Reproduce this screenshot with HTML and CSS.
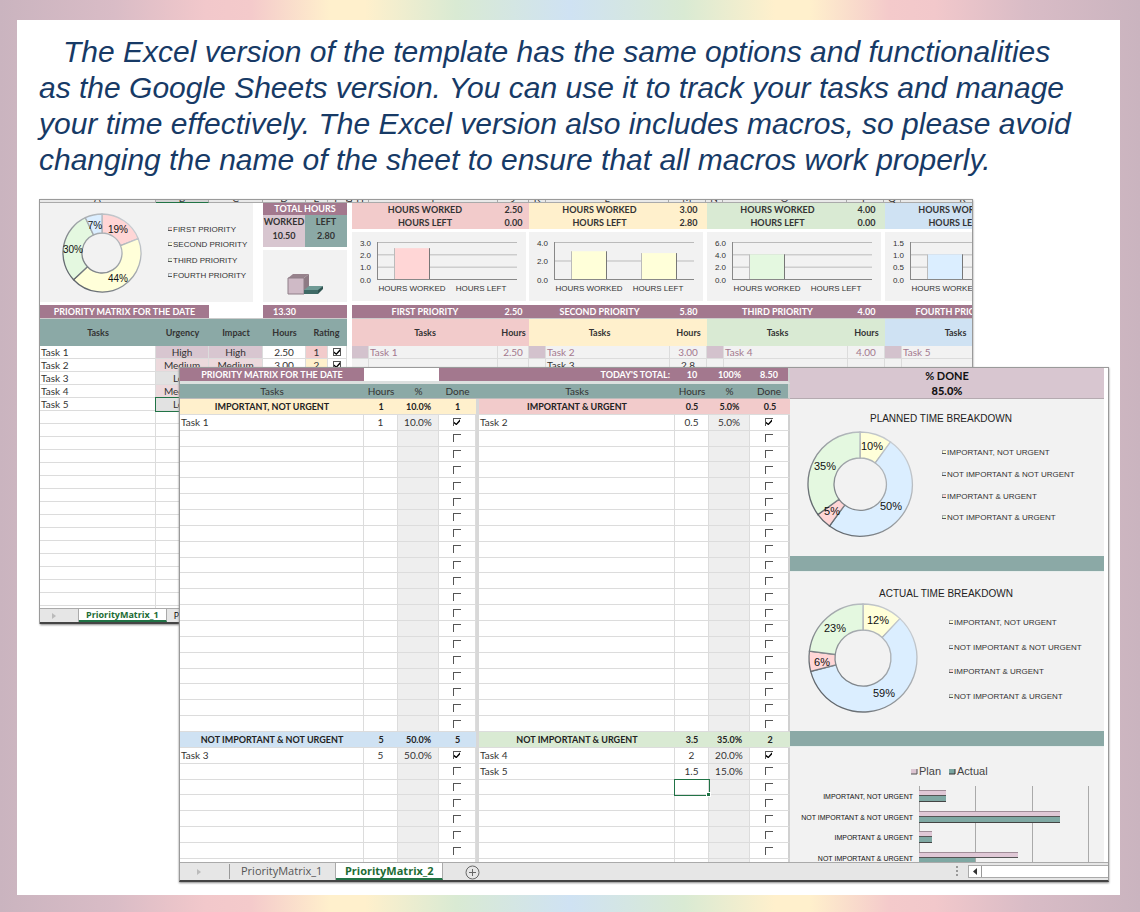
FILE: index.html
```html
<!DOCTYPE html>
<html lang="en">
<head>
  <meta charset="UTF-8">
  <title>Priority Matrix - Excel version</title>
  <link rel="stylesheet" href="styles.css">
</head>
<body>
  <main class="page">
    <p class="intro">The Excel version of the template has the same options and functionalities<br>
      as the Google Sheets version. You can use it to track your tasks and manage<br>
      your time effectively. The Excel version also includes macros, so please avoid<br>
      changing the name of the sheet to ensure that all macros work properly.</p>

    <div class="stage">
      <!-- PriorityMatrix_1 -->
      <section class="window win-back">
        <div class="columns">
          <span class="w116">A</span><span class="w53 selected">B</span><span class="w54">C</span><span class="w43">D</span><span class="w22">E</span><span class="w19">F</span><span class="w5">G</span>
          <span class="w17">H</span><span class="w129">I</span><span class="w31">J</span><span class="w17">K</span><span class="w123">L</span><span class="w37">M</span><span class="w17">N</span><span class="w124">O</span><span class="w37">P</span><span class="w17">Q</span><span class="w124">R</span>
        </div>
        <div class="sheet">
          <div class="matrix">
            <div class="summary">
              <svg class="share-chart" width="213" height="99">
                <g class="donut" data-cx="62" data-cy="50" data-outer="39" data-inner="20" data-slices="19:pink,44:yellow,30:green,7:blue"></g>
                <g class="percent small">
                  <text x="78" y="30">19%</text>
                  <text x="78" y="79">44%</text>
                  <text x="33" y="50">30%</text>
                  <text x="55" y="26">7%</text>
                </g>
                <g class="legend" data-x="128" data-ys="26,41,57,72" data-labels="FIRST PRIORITY|SECOND PRIORITY|THIRD PRIORITY|FOURTH PRIORITY" data-colors="pink,yellow,green,blue"></g>
              </svg>
              <div class="totals">
                <h2>TOTAL HOURS</h2>
                <dl>
                  <div class="worked"><dt>WORKED</dt><dd>10.50</dd></div>
                  <div class="left"><dt>LEFT</dt><dd>2.80</dd></div>
                </dl>
                <svg class="cube" width="84" height="52">
                  <path d="M25 28l5-4h16l-5 4z" fill="#97828c"/>
                  <path d="M41 28l5-4v16l-5 4z" fill="#8e7a84"/>
                  <path d="M25 28h16v16H25z" fill="#cfbac6" stroke="#8f7f88"/>
                  <path d="M41 40l5-4h14l-5 5z" fill="#6f9a95"/>
                  <path d="M41 40h14v4H41z" fill="#3f6a66"/>
                  <path d="M55 40l5-4v3l-5 5z" fill="#2f5451"/>
                </svg>
              </div>
            </div>
            <table class="tasks-table">
              <colgroup><col class="w116"><col class="w53"><col class="w54"><col class="w43"><col class="w22"><col class="w19"></colgroup>
              <thead>
                <tr class="title"><th colspan="2">PRIORITY MATRIX FOR THE DATE</th><td class="blank"></td><th>13.30</th><th colspan="2"></th></tr>
                <tr class="heads"><th>Tasks</th><th>Urgency</th><th>Impact</th><th>Hours</th><th colspan="2">Rating</th></tr>
              </thead>
              <tbody id="matrixRows"></tbody>
            </table>
          </div>
          <div class="priorities" id="priorities"></div>
        </div>
        <nav class="tabs">
          <span class="arrow"></span>
          <button class="active">PriorityMatrix_1</button>
          <button class="next">PriorityMatrix_2</button>
        </nav>
      </section>

      <!-- PriorityMatrix_2 -->
      <section class="window win-front">
        <div class="sheet">
          <table class="day-table">
            <colgroup>
              <col class="w184"><col class="w34"><col class="w41"><col class="w37"><col class="w3">
              <col class="w196"><col class="w34"><col class="w41"><col class="w40">
            </colgroup>
            <thead>
              <tr class="title">
                <th>PRIORITY MATRIX FOR THE DATE</th><td colspan="2" class="blank"></td><th colspan="2"></th>
                <th class="total">TODAY'S TOTAL:</th><th>10</th><th>100%</th><th>8.50</th>
              </tr>
              <tr class="heads">
                <th>Tasks</th><th>Hours</th><th>%</th><th>Done</th><th></th>
                <th>Tasks</th><th>Hours</th><th>%</th><th>Done</th>
              </tr>
            </thead>
            <tbody id="dayRows"></tbody>
          </table>
          <aside class="charts">
            <div class="done-rate"><span>% DONE</span><strong>85.0%</strong></div>
            <svg class="chart" width="314" height="157">
              <text class="chart-title" x="151" y="23">PLANNED TIME BREAKDOWN</text>
              <g class="donut" data-cx="70" data-cy="85" data-outer="52" data-inner="26" data-slices="10:yellow,50:blue,5:pink,35:green"></g>
              <g class="percent">
                <text x="82" y="51">10%</text>
                <text x="101" y="111">50%</text>
                <text x="42" y="116">5%</text>
                <text x="35" y="71">35%</text>
              </g>
              <g class="legend" data-x="152" data-ys="53,75,97,118" data-labels="IMPORTANT, NOT URGENT|NOT IMPORTANT &amp; NOT URGENT|IMPORTANT &amp; URGENT|NOT IMPORTANT &amp; URGENT" data-colors="yellow,blue,pink,green"></g>
            </svg>
            <div class="divider"></div>
            <svg class="chart" width="314" height="159">
              <text class="chart-title" x="156" y="25">ACTUAL TIME BREAKDOWN</text>
              <g class="donut" data-cx="73" data-cy="86" data-outer="54" data-inner="28" data-slices="12:yellow,59:blue,6:pink,23:green"></g>
              <g class="percent">
                <text x="88" y="52">12%</text>
                <text x="94" y="125">59%</text>
                <text x="32" y="94">6%</text>
                <text x="45" y="60">23%</text>
              </g>
              <g class="legend" data-x="159" data-ys="50,75,99,124" data-labels="IMPORTANT, NOT URGENT|NOT IMPORTANT &amp; NOT URGENT|IMPORTANT &amp; URGENT|NOT IMPORTANT &amp; URGENT" data-colors="yellow,blue,pink,green"></g>
            </svg>
            <div class="divider"></div>
            <svg class="chart" width="314" height="115">
              <g class="series">
                <rect x="121" y="22" width="6" height="5" fill="#dcc5d2"/><path d="M121 27h6v-5" fill="none" stroke="#555"/>
                <text x="129" y="28">Plan</text>
                <rect x="159" y="22" width="6" height="5" fill="#7ba6a1"/><path d="M159 27h6v-5" fill="none" stroke="#333"/>
                <text x="167" y="28">Actual</text>
              </g>
              <path class="axis" d="M129.500 39v76M185.500 39v76M242.500 39v76M298.500 39v76"/>
              <g id="planBars"></g>
            </svg>
          </aside>
        </div>
        <nav class="tabs">
          <span class="arrow"></span>
          <button class="first">PriorityMatrix_1</button>
          <button class="active">PriorityMatrix_2</button>
          <button class="add" aria-label="New sheet">
            <svg width="15" height="15"><circle cx="7.500" cy="7.500" r="6.500"/><path d="M4 7.500h7M7.500 4v7"/></svg>
          </button>
          <span class="grip"></span>
          <div class="scroll">
            <button aria-label="Scroll left"><svg width="12" height="11"><path d="M8 2v7L4 5.500z"/></svg></button>
          </div>
        </nav>
      </section>
    </div>
  </main>
  <script src="script.js"></script>
</body>
</html>
```
FILE: styles.css
```css
* {
  box-sizing: border-box;
}

body {
  margin: 0;
  min-height: 100vh;
  padding: 20px 20px 17px 17px;
  display: flex;
  background: linear-gradient(90deg, #cab4bf 0%, #d9bcc6 10%, #f2c8cb 18%, #f4cacb 22%, #fff0cc 29%, #fff0cc 32%, #d9ead3 40%, #cfe2f3 50%, #d9ead3 60%, #fff0cc 68%, #fff0cc 71%, #f4cacb 78%, #f2c8cb 82%, #d9bcc6 90%, #cab4bf 100%);
  font-family: Lato, sans-serif;
  font-size: 10px;
  color: #333;
}

.page {
  flex: 1;
  min-width: 0;
  padding: 14px 11px 11px 22px;
  background: #fff;
}

.intro {
  margin: 0;
  font: italic 30px/36px "Liberation Sans", Arial, sans-serif;
  color: #173a66;
  text-indent: 24px;
  white-space: nowrap;
}

.stage {
  display: grid;
  margin: 21px 0 0 1px;
}

.window {
  grid-area: 1 / 1;
  min-width: 0;
  align-self: start;
  isolation: isolate;
  overflow: hidden;
  background: #fff;
  border: 1px solid #9a9a9a;
  border-bottom: 2px solid #444;
  box-shadow: 0 1px 2px #888;
}

.win-back {
  margin-right: 136px;
  border-left: none;
  box-shadow: -1px 0 #9a9a9a, 0 1px 2px #888;
}

.win-front {
  margin: 168px 0 0 139px;
  z-index: 1;
}

.sheet {
  display: flex;
}

button {
  border: none;
  padding: 0;
  background: none;
  font-family: inherit;
  cursor: pointer;
}

table {
  border-collapse: separate;
  border-spacing: 0;
  table-layout: fixed;
}

th, td {
  padding: 0;
  text-align: center;
  white-space: nowrap;
  overflow: hidden;
}

/* column widths */
.w3 { width: 3px; }
.w5 { width: 5px; }
.w17 { width: 17px; }
.w19 { width: 19px; }
.w22 { width: 22px; }
.w31 { width: 31px; }
.w34 { width: 34px; }
.w37 { width: 37px; }
.w40 { width: 40px; }
.w41 { width: 41px; }
.w43 { width: 43px; }
.w53 { width: 53px; }
.w54 { width: 54px; }
.w116 { width: 116px; }
.w123 { width: 123px; }
.w124 { width: 124px; }
.w129 { width: 129px; }
.w177 { width: 177px; }
.w178 { width: 178px; }
.w184 { width: 184px; }
.w196 { width: 196px; }

input[type="checkbox"] {
  appearance: none;
  display: block;
  width: 8px;
  height: 8px;
  margin: 0 auto;
  border: 1px solid #555;
  background: #fff;
}

input[type="checkbox"]:checked::before {
  content: "";
  display: block;
  width: 6px;
  height: 6px;
  background: #000;
  clip-path: polygon(0 40%, 38% 70%, 100% 0, 100% 36%, 40% 100%, 0 72%);
}

/* back window */
.columns {
  display: flex;
  height: 3px;
  overflow: hidden;
  background: #e9e9e9;
}

.columns span {
  flex: none;
  height: 3px;
  border-right: 1px solid #aaa;
  border-bottom: 1px solid #aaa;
  display: flex;
  align-items: flex-end;
  justify-content: center;
  line-height: 8px;
}

.columns .selected {
  background: #d3d3d3;
  border-bottom-color: #217346;
}

.matrix {
  flex: none;
  width: 307px;
  margin-right: 5px;
}

.summary {
  display: flex;
  justify-content: space-between;
  margin-bottom: 3px;
}

.share-chart {
  background: #f2f2f2;
}

.totals {
  width: 84px;
}

.totals h2 {
  margin: 0;
  font-size: 9px;
  line-height: 12px;
  text-align: center;
  background: #a3788e;
  color: #fff;
}

.totals dl {
  display: flex;
  margin: 0 0 3px;
  height: 32px;
  font-size: 9px;
  font-weight: bold;
  line-height: 14px;
  text-align: center;
}

.totals dd {
  margin: 0;
}

.worked, .left {
  flex: 1;
  min-width: 0;
}

.worked {
  background: #d8c6d0;
}

.left {
  background: #8ba9a6;
}

.cube {
  display: block;
  background: #f2f2f2;
}

.title th {
  height: 13px;
  background: #a3788e;
  color: #fff;
  font-size: 9px;
  line-height: 12px;
}

.tasks-table {
  width: 307px;
}

.tasks-table .heads th {
  height: 28px;
  padding-bottom: 1px;
  background: #8ba9a6;
  border-top: 1px solid #ccc;
  font-size: 9px;
}

.tasks-table td {
  height: 13px;
  line-height: 12px;
  border-right: 1px solid #dcdcdc;
  border-bottom: 1px solid #dcdcdc;
}

.tasks-table .blank, .day-table .blank {
  border: none;
}

.tasks-table td:first-child, .day-table .name {
  padding-left: 1px;
  text-align: left;
}

.tasks-table .high { background: #d8c6d0; }
.tasks-table .medium { background: #ecd9dc; }
.tasks-table .low { background: #e2e2e2; }
.tasks-table .rate1 { background: #f2cbcb; }
.tasks-table .rate2 { background: #fff0cc; }

td.current {
  position: relative;
  overflow: visible;
  box-shadow: 0 0 0 1px #217346;
}

/* fill handle of the selected cell */
td.current::after {
  content: "";
  position: absolute;
  right: -2px;
  bottom: -2px;
  width: 3px;
  height: 3px;
  background: #217346;
  outline: 1px solid #fff;
}

.tasks-table .tail td {
  height: 2px;
  line-height: 0;
  border-bottom: none;
}

.priorities {
  display: flex;
  flex: 1;
  min-width: 0;
  overflow: hidden;
}

.priority {
  flex: none;
}

.worked-left {
  display: flex;
  margin-bottom: 3px;
  font-size: 9px;
  font-weight: bold;
  line-height: 13px;
  text-align: center;
}

.worked-left div {
  flex: 1;
}

.priority > svg {
  display: block;
  margin-bottom: 4px;
}

.priority table {
  width: 100%;
}

.priority .heads th {
  height: 28px;
  padding-bottom: 1px;
  border-top: 1px solid #ccc;
  font-size: 9px;
}

.priority td {
  height: 13px;
  line-height: 12px;
  background: #f2f2f2;
  border-right: 1px solid #dcdcdc;
  border-bottom: 1px solid #dcdcdc;
}

.priority .ticked td {
  color: #a3788e;
}

.priority .ticked td:first-child {
  background: #d3c2cd;
}

.priority td:nth-child(2) {
  padding-left: 1px;
  text-align: left;
}

.tone-pink { background: #f2cbcb; }
.tone-yellow { background: #fff0cc; }
.tone-green { background: #d9ead3; }
.tone-blue { background: #cfe2f3; }

/* front window */
.day-table {
  flex: 1;
  height: 494px;
}

.day-table .title th, .day-table .title td {
  height: 16px;
  border-bottom: 3px solid #dce0df;
}

.day-table .title .total {
  padding-right: 5px;
  text-align: right;
}

.day-table .heads th {
  height: 15px;
  background: #8ba9a6;
  border-bottom: 1px solid #bbb;
  font-size: 10px;
  font-weight: normal;
  line-height: 13px;
}

.day-table td {
  line-height: 13px;
  border-right: 1px solid #dcdcdc;
  border-bottom: 1px solid #dcdcdc;
}

.day-table td:nth-child(3), .day-table td:nth-child(8) {
  background: #eee;
}

.day-table td:nth-child(5) {
  background: #d8d8d8;
  border: none;
}

.day-table .title td {
  background: #fff;
}

.day-table td:last-child, .day-table .title th:last-child, .day-table .heads th:last-child {
  border-right: 2px solid #d0d0d0;
}

.day-table .category td {
  color: #222;
  font-size: 9px;
  font-weight: bold;
  border-right: none;
}

.day-table .category .tone-pink { background: #f2cbcb; }
.day-table .category .tone-yellow { background: #fff0cc; }
.day-table .category .tone-green { background: #d9ead3; }
.day-table .category .tone-blue { background: #cfe2f3; }

.day-table input[type="checkbox"] {
  border-width: 1px 0 0 1px;
}

.day-table .tail td {
  height: 3px;
  line-height: 0;
  border-bottom: none;
}

.charts {
  flex: none;
  width: 318px;
  height: 494px;
  padding-right: 4px;
  overflow: hidden;
}

.done-rate {
  display: flex;
  flex-direction: column;
  align-items: center;
  height: 31px;
  background: #d8c6d0;
  border-bottom: 1px solid #b5aab0;
  color: #111;
  font-size: 11px;
  font-weight: bold;
  line-height: 15px;
}

.chart {
  display: block;
  background: #f2f2f2;
}

.divider {
  height: 16px;
  background: #8ba9a6;
  border-bottom: 1px solid #e8eeed;
}

svg text {
  font-family: "Liberation Sans", Arial, sans-serif;
}

.chart-title {
  font-size: 10px;
  text-anchor: middle;
  fill: #222;
}

.percent text {
  font-size: 11px;
  text-anchor: middle;
  fill: #111;
}

.percent.small text {
  font-size: 10px;
}

.legend text {
  font-size: 8px;
  fill: #333;
}

.series text {
  font-size: 11px;
  fill: #444;
}

.axis {
  stroke: #aaa;
  fill: none;
}

.bar-label {
  font-size: 7px;
  text-anchor: end;
  fill: #111;
}

.scale {
  font-size: 8px;
  text-anchor: end;
  fill: #333;
}

.bar-name {
  font-size: 8px;
  text-anchor: middle;
  fill: #333;
}

/* sheet tabs */
.tabs {
  display: flex;
  height: 18px;
  background: #e6e6e6;
  border-top: 1px solid #aaa;
  font-family: "Open Sans", sans-serif;
}

.tabs .active {
  background: #fff;
  border-right: 1px solid #aaa;
  border-bottom: 2px solid #217346;
  color: #1c6b34;
  font-weight: bold;
}

.arrow {
  display: flex;
  align-items: center;
  justify-content: center;
}

.arrow::before {
  content: "";
  border: 3px solid transparent;
  border-left: 4px solid #bbb;
  border-right: none;
}

.win-back .tabs {
  height: 14px;
}

.win-back .arrow {
  width: 39px;
  padding-right: 10px;
  border-right: 1px solid #aaa;
}

.win-back .tabs button {
  padding: 0 7px;
  font-size: 9px;
  line-height: 10px;
}

.win-front .arrow {
  width: 50px;
  padding-right: 12px;
  border-right: 1px solid #999;
  margin: 1px 0;
}

.win-front .first {
  padding: 0 13px 3px 11px;
  border-right: 1px solid #aaa;
  color: #555;
  font-size: 11px;
  line-height: 13px;
}

.win-front .active {
  width: 107px;
  font-size: 11px;
  line-height: 13px;
}

.add {
  margin-left: 22px;
  padding-top: 1px;
}

.add svg {
  display: block;
  fill: none;
  stroke: #666;
}

.grip {
  margin: 3px 10px 0 auto;
  width: 2px;
  height: 11px;
  background: repeating-linear-gradient(#999 0 2px, transparent 2px 4px);
}

.scroll {
  width: 140px;
  height: 13px;
  margin-top: 2px;
  background: #fff;
  border: 1px solid #aaa;
  border-right: none;
}

.scroll button {
  display: block;
  width: 13px;
  height: 11px;
  border-right: 1px solid #999;
}

.scroll svg {
  display: block;
  fill: #333;
}
```
FILE: script.js
```javascript
const colors = { pink: '#ffd6d6', yellow: '#ffffd9', green: '#e4f8e0', blue: '#dbeeff' };

// PriorityMatrix_1: task list
const tasks = [
  ['Task 1', 'High', 'High', '2.50', 1],
  ['Task 2', 'Medium', 'Medium', '3.00', 2],
  ['Task 3', 'Low', 'High', '2.80', 2],
  ['Task 4', 'Medium', 'Low', '4.00', 3],
  ['Task 5', 'Low', 'Low', '1.00', 4]
];
const box = (checked, label) => `<input type="checkbox" aria-label="${label}"${checked ? ' checked' : ''}>`;

let html = '';
for (let i = 0; i < 20; i++) {
  const t = tasks[i];
  if (t) {
    html += `<tr><td>${t[0]}</td><td class="${t[1].toLowerCase()}${i === 4 ? ' current' : ''}">${t[1]}</td>
      <td class="${t[2].toLowerCase()}">${t[2]}</td><td>${t[3]}</td><td class="rate${t[4]}">${t[4]}</td><td>${box(true, t[0])}</td></tr>`;
  } else {
    html += '<tr>' + '<td></td>'.repeat(6) + '</tr>';
  }
}
html += '<tr class="tail">' + '<td></td>'.repeat(6) + '</tr>';
document.getElementById('matrixRows').innerHTML = html;

// PriorityMatrix_1: four priority blocks
const blocks = [
  { name: 'FIRST', tone: 'pink', worked: 2.5, left: 0, total: '2.50', max: 3, steps: 3, width: 177, cols: [17, 129, 31], rows: [['Task 1', '2.50', true], ['', '']] },
  { name: 'SECOND', tone: 'yellow', worked: 3, left: 2.8, total: '5.80', max: 4, steps: 2, width: 178, cols: [17, 124, 37], rows: [['Task 2', '3.00', true], ['Task 3', '2.8']] },
  { name: 'THIRD', tone: 'green', worked: 4, left: 0, total: '4.00', max: 6, steps: 3, width: 178, cols: [17, 124, 37], rows: [['Task 4', '4.00', true], ['', '']] },
  { name: 'FOURTH', tone: 'blue', worked: 1, left: 0, total: '1.00', max: 1.5, steps: 3, width: 178, cols: [17, 124, 37], rows: [['Task 5', '1.00', true], ['', '']] }
];

function barChart(b) {
  let s = '<rect width="174" height="69" fill="#f2f2f2"/>';
  for (let i = 0; i <= b.steps; i++) {
    const y = 47.5 - 37 * i / b.steps;
    s += `<path d="M25 ${y}h140" stroke="${i ? '#bbb' : '#888'}"/><text class="scale" x="19" y="${y + 3}">${(b.max * i / b.steps).toFixed(1)}</text>`;
  }
  s += '<path d="M25.5 10v37" stroke="#888"/>';
  [[b.worked, 42], [b.left, 112]].forEach(([v, x]) => {
    const h = 37 * v / b.max;
    if (h) {
      s += `<rect x="${x}" y="${47 - h}" width="35" height="${h}" fill="${colors[b.tone]}"/>
        <path d="M${x + 35.5} ${47 - h}v${h}" stroke="#777"/><path d="M${x + .5} ${47 - h}v${h}" stroke="#bbb"/>`;
    }
  });
  return `<svg width="177" height="69">${s}<text class="bar-name" x="60" y="59">HOURS WORKED</text><text class="bar-name" x="129" y="59">HOURS LEFT</text></svg>`;
}

document.getElementById('priorities').innerHTML = blocks.map(b => `
  <div class="priority w${b.width}">
    <div class="worked-left tone-${b.tone}">
      <div>HOURS WORKED<br>HOURS LEFT</div>
      <span class="w${b.cols[2]}">${b.worked.toFixed(2)}<br>${b.left.toFixed(2)}</span>
    </div>
    ${barChart(b)}
    <table>
      <colgroup>${b.cols.map(c => `<col class="w${c}">`).join('')}</colgroup>
      <tr class="title"><th colspan="2">${b.name} PRIORITY</th><th>${b.total}</th></tr>
      <tr class="heads tone-${b.tone}"><th colspan="2">Tasks</th><th>Hours</th></tr>
      ${b.rows.map(r => `<tr class="${r[2] ? 'ticked' : ''}"><td></td><td>${r[0]}</td><td>${r[1]}</td></tr>`).join('')}
    </table>
  </div>`).join('');

// PriorityMatrix_2: quadrants, [name, hours, percent, done]
const half = (r, i) => r
  ? `<td class="name">${r[0]}</td><td>${r[1]}</td><td>${r[2]}</td><td>${box(r[3], r[0])}</td>`
  : `<td class="name">&nbsp;</td><td></td><td></td><td>${box(false, 'Row ' + i)}</td>`;
const head = (tone, cells) => cells.map(c => `<td class="tone-${tone}">${c}</td>`).join('');

function quadrants(left, right, count) {
  let out = `<tr class="category">${head(left.tone, left.head)}<td></td>${head(right.tone, right.head)}</tr>`;
  for (let i = 0; i < count; i++) {
    out += `<tr>${half(left.rows[i], i + 1)}<td></td>${half(right.rows[i], i + 1)}</tr>`;
  }
  return out;
}

const dayRows = document.getElementById('dayRows');
dayRows.innerHTML = quadrants(
  { tone: 'yellow', head: ['IMPORTANT, NOT URGENT', '1', '10.0%', '1'], rows: [['Task 1', '1', '10.0%', true]] },
  { tone: 'pink', head: ['IMPORTANT &amp; URGENT', '0.5', '5.0%', '0.5'], rows: [['Task 2', '0.5', '5.0%', true]] },
  20
) + quadrants(
  { tone: 'blue', head: ['NOT IMPORTANT &amp; NOT URGENT', '5', '50.0%', '5'], rows: [['Task 3', '5', '50.0%', true]] },
  { tone: 'green', head: ['NOT IMPORTANT &amp; URGENT', '3.5', '35.0%', '2'], rows: [['Task 4', '2', '20.0%', true], ['Task 5', '1.5', '15.0%', false]] },
  7
) + '<tr class="tail">' + '<td></td>'.repeat(9) + '</tr>';
dayRows.rows[24].cells[6].classList.add('current');

// Donut charts
document.querySelectorAll('.donut').forEach((g, n) => {
  const cx = +g.dataset.cx, cy = +g.dataset.cy, R = +g.dataset.outer, r = +g.dataset.inner;
  const point = (radius, part) => {
    const a = part * 2 * Math.PI / 100;
    return (cx + radius * Math.sin(a)).toFixed(2) + ' ' + (cy - radius * Math.cos(a)).toFixed(2);
  };
  let start = 0;
  let out = `<linearGradient id="edge${n}" gradientUnits="userSpaceOnUse" x1="${cx + R}" y1="${cy - R / 2}" x2="${cx - R / 2}" y2="${cy + R}">
    <stop offset="0" stop-color="#c9ced3"/><stop offset=".5" stop-color="#9a9fa3"/><stop offset="1" stop-color="#5c6268"/></linearGradient>`;
  g.dataset.slices.split(',').forEach(s => {
    const [v, color] = s.split(':');
    const end = start + +v;
    const big = v >= 50 ? 1 : 0;
    out += `<path d="M${point(R, start)}A${R} ${R} 0 ${big} 1 ${point(R, end)}L${point(r, end)}A${r} ${r} 0 ${big} 0 ${point(r, start)}z"
      fill="${colors[color]}" stroke="url(#edge${n})" stroke-width="1.3"/>`;
    start = end;
  });
  g.innerHTML = out;
});

// Chart legends
document.querySelectorAll('.legend').forEach(g => {
  const x = +g.dataset.x;
  const ys = g.dataset.ys.split(',');
  const fills = g.dataset.colors.split(',');
  g.innerHTML = g.dataset.labels.split('|').map((label, i) => {
    const y = +ys[i];
    return `<rect x="${x}" y="${y - 2}" width="4" height="4" fill="${colors[fills[i]]}"/>
      <path d="M${x} ${y - 1.5}h4M${x + .5} ${y - 2}v4" fill="none" stroke="#aaa"/>
      <path d="M${x} ${y + 1.5}h4" stroke="#555"/>
      <text x="${x + 5}" y="${y + 3}">${label.replace('&', '&amp;')}</text>`;
  }).join('');
});

// Plan / actual bars
const bars = [
  ['IMPORTANT, NOT URGENT', 27, 27],
  ['NOT IMPORTANT &amp; NOT URGENT', 141, 141],
  ['IMPORTANT &amp; URGENT', 13, 13],
  ['NOT IMPORTANT &amp; URGENT', 99, 56]
];
document.getElementById('planBars').innerHTML = bars.map(([name, plan, actual], i) => {
  const y = 43 + i * 21 - (i > 1 ? 1 : 0);
  return `<rect x="129" y="${y}" width="${plan}" height="6" fill="#e0c8d6"/>
    <path d="M129 ${y + .5}h${plan}" stroke="#a08d98"/><path d="M129 ${y + 5.5}h${plan}" stroke="#555"/>
    <rect x="129" y="${y + 6}" width="${actual}" height="6" fill="#7fa8a3"/>
    <path d="M129 ${y + 11.5}h${actual}" stroke="#444"/>
    <text class="bar-label" x="123" y="${y + 9}">${name}</text>`;
}).join('');
```
